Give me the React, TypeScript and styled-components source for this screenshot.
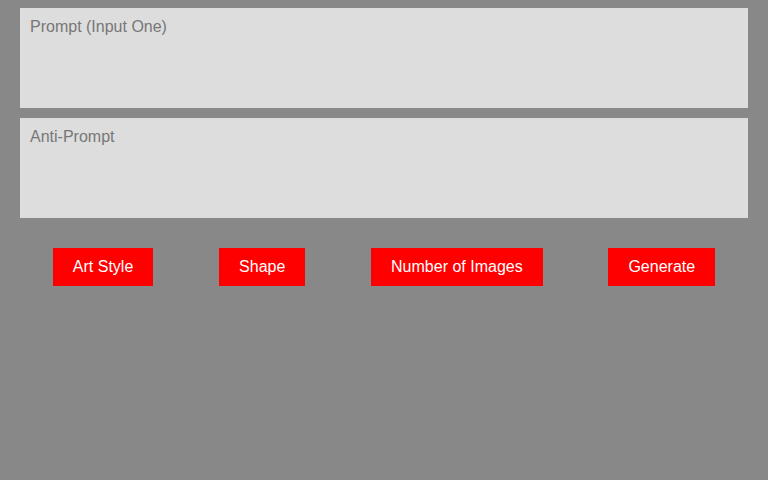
import React from 'react';
import styled, { createGlobalStyle } from 'styled-components';

const GlobalStyle = createGlobalStyle`
  html, body {
    margin: 0;
    padding: 0;
    background-color: #888888;
    font-family: "Liberation Sans", Arial, sans-serif;
  }
`;

const Page = styled.div`
  width: 768px;
  height: 480px;
  box-sizing: border-box;
  padding: 8px 20px 0;
  display: flex;
  flex-direction: column;
  gap: 10px;
`;

const PromptBox = styled.textarea`
  display: block;
  width: 100%;
  height: 100px;
  box-sizing: border-box;
  margin: 0;
  padding: 10px;
  border: none;
  outline: none;
  resize: none;
  background-color: #dddddd;
  color: #333;
  font-family: "Liberation Sans", Arial, sans-serif;
  font-size: 16px;
  line-height: 18px;

  &::placeholder {
    color: #777777;
  }
`;

const ButtonRow = styled.div`
  display: flex;
  justify-content: space-around;
  margin-top: 20px;
`;

const Button = styled.button`
  height: 38px;
  padding: 0 20px;
  border: none;
  background-color: #ff0000;
  color: #ffffff;
  font-family: "Liberation Sans", Arial, sans-serif;
  font-size: 16px;
  cursor: pointer;
`;

const buttons = ['Art Style', 'Shape', 'Number of Images', 'Generate'];

const App: React.FC = () => (
  <>
    <GlobalStyle />
    <Page>
      <PromptBox placeholder="Prompt (Input One)" />
      <PromptBox placeholder="Anti-Prompt" />
      <ButtonRow>
        {buttons.map((label) => (
          <Button key={label}>{label}</Button>
        ))}
      </ButtonRow>
    </Page>
  </>
);

export default App;
